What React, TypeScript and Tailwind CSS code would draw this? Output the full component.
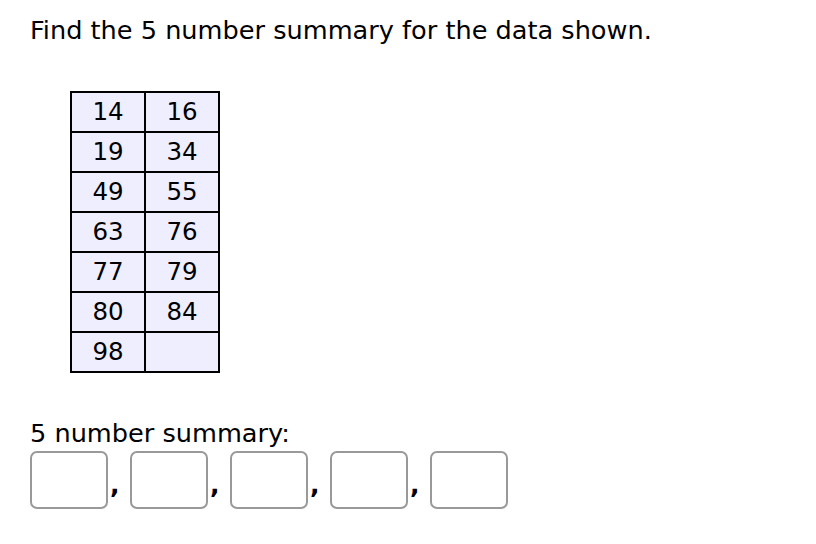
const rows: (number | null)[][] = [
  [14, 16],
  [19, 34],
  [49, 55],
  [63, 76],
  [77, 79],
  [80, 84],
  [98, null],
];

export default function App() {
  return (
    <div
      className="w-[816px] h-[544px] bg-white text-black pl-[30px] pt-[14px]"
      style={{ fontFamily: '"DejaVu Sans", Verdana, sans-serif' }}
    >
      <div className="text-[25.6px] leading-[32px]">
        Find the 5 number summary for the data shown.
      </div>

      <table className="mt-[45px] ml-[40px] border-collapse border-2 border-black bg-[#eeeeff] text-[24.5px]">
        <tbody>
          {rows.map((r, i) => (
            <tr key={i} className="h-[40px]">
              {r.map((v, j) => (
                <td
                  key={j}
                  className="w-[74px] border-2 border-black text-center p-0 leading-[36px]"
                >
                  {v ?? ""}
                </td>
              ))}
            </tr>
          ))}
        </tbody>
      </table>

      <div className="mt-[44px] text-[25.6px] leading-[32px]">5 number summary:</div>

      <div className="flex items-start mt-[2px]">
        {[0, 1, 2, 3, 4].map((i) => (
          <div key={i} className="flex items-start">
            <input
              type="text"
              className="w-[78px] h-[58px] border-2 border-[#999999] rounded-[7px] bg-white outline-none"
            />
            {i < 4 && (
              <span className="w-[22px] text-[25px] font-bold leading-[30px] pl-[2px] mt-[19px]">,</span>
            )}
          </div>
        ))}
      </div>
    </div>
  );
}
